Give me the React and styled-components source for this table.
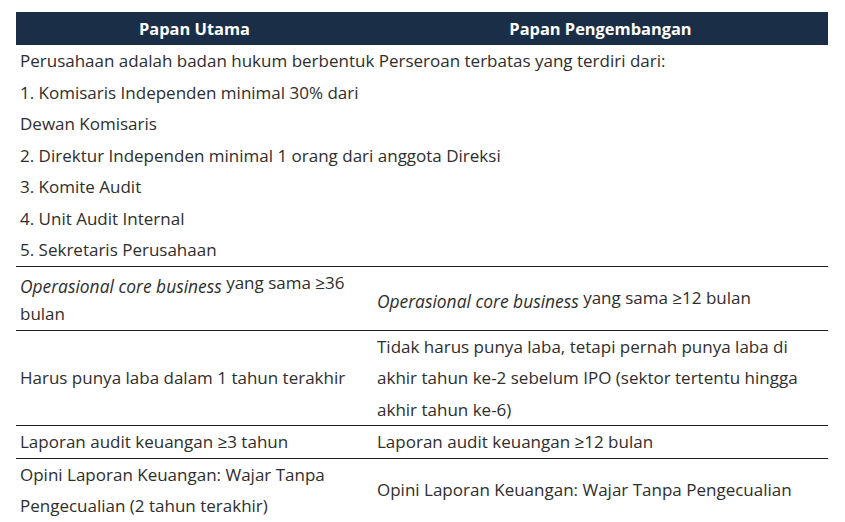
import React from "react";
import styled, { createGlobalStyle } from "styled-components";

const GlobalStyle = createGlobalStyle`
  body {
    margin: 0;
    background: #ffffff;
    font-family: "Open Sans", "Noto Sans", sans-serif;
    color: #2e2e2e;
  }
`;

const Wrapper = styled.div`
  padding: 12px 17px 0 16px;
`;

const Table = styled.table`
  width: 812px;
  border-collapse: collapse;
  table-layout: fixed;
  font-size: 17px;
  line-height: 31.5px;
`;

const HeadCell = styled.th`
  background: #1a2f47;
  color: #ffffff;
  font-weight: 700;
  font-size: 16.4px;
  height: 33px;
  padding: 0;
  line-height: 33px;
  text-align: center;
  width: ${({ $width }) => $width};
`;

const Row = styled.tr`
  border-top: ${({ $first }) => ($first ? "none" : "1px solid #1f1f1f")};
`;

const Cell = styled.td`
  padding: 0 4px;
  vertical-align: middle;
  white-space: nowrap;
`;

const Line = styled.div``;

const Term = styled.em`
  display: inline-block;
  font-style: italic;
  font-size: 17.4px;
  transform: translateY(4px);
`;

function App() {
  return (
    <>
      <GlobalStyle />
      <Wrapper>
        <Table>
          <thead>
            <tr>
              <HeadCell $width="357px">Papan Utama</HeadCell>
              <HeadCell $width="455px">Papan Pengembangan</HeadCell>
            </tr>
          </thead>
          <tbody>
            <Row $first>
              <Cell colSpan={2}>
                <Line>Perusahaan adalah badan hukum berbentuk Perseroan terbatas yang terdiri dari:</Line>
                <Line>1. Komisaris Independen minimal 30% dari</Line>
                <Line>Dewan Komisaris</Line>
                <Line>2. Direktur Independen minimal 1 orang dari anggota Direksi</Line>
                <Line>3. Komite Audit</Line>
                <Line>4. Unit Audit Internal</Line>
                <Line>5. Sekretaris Perusahaan</Line>
              </Cell>
            </Row>
            <Row>
              <Cell>
                <Line>
                  <Term>Operasional core business</Term> yang sama ≥36
                </Line>
                <Line>bulan</Line>
              </Cell>
              <Cell>
                <Term>Operasional core business</Term> yang sama ≥12 bulan
              </Cell>
            </Row>
            <Row>
              <Cell>Harus punya laba dalam 1 tahun terakhir</Cell>
              <Cell>
                <Line>Tidak harus punya laba, tetapi pernah punya laba di</Line>
                <Line>akhir tahun ke-2 sebelum IPO (sektor tertentu hingga</Line>
                <Line>akhir tahun ke-6)</Line>
              </Cell>
            </Row>
            <Row>
              <Cell>Laporan audit keuangan ≥3 tahun</Cell>
              <Cell>Laporan audit keuangan ≥12 bulan</Cell>
            </Row>
            <Row>
              <Cell>
                <Line>Opini Laporan Keuangan: Wajar Tanpa</Line>
                <Line>Pengecualian (2 tahun terakhir)</Line>
              </Cell>
              <Cell>Opini Laporan Keuangan: Wajar Tanpa Pengecualian</Cell>
            </Row>
          </tbody>
        </Table>
      </Wrapper>
    </>
  );
}

export default App;
